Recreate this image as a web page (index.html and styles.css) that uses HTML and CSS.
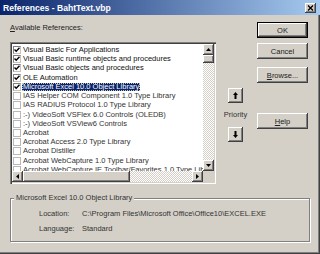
FILE: index.html
```html
<!DOCTYPE html>
<html>
<head>
<meta charset="utf-8">
<link rel="stylesheet" href="styles.css">
</head>
<body>
<div class="window">
  <div class="titlebar">
    <span class="title">References - BahtText.vbp</span>
    <span class="close"><svg width="7" height="6" viewBox="0 0 7 6"><path d="M1 0.5L6 5.5M6 0.5L1 5.5" stroke="#000" stroke-width="1.3" fill="none"/></svg></span>
  </div>
  <div class="main">
    <div class="left">
      <div class="label"><u>A</u>vailable References:</div>
      <div class="list">
        <div class="rows">
          <div class="row on"><span class="box"><svg width="6" height="6" viewBox="0 0 6 6"><path d="M0.5 2.5L2.2 4.3L5.5 0.8" fill="none" stroke="#000" stroke-width="1.4"/></svg></span><span class="txt">Visual Basic For Applications</span></div>
          <div class="row on"><span class="box"><svg width="6" height="6" viewBox="0 0 6 6"><path d="M0.5 2.5L2.2 4.3L5.5 0.8" fill="none" stroke="#000" stroke-width="1.4"/></svg></span><span class="txt">Visual Basic runtime objects and procedures</span></div>
          <div class="row on"><span class="box"><svg width="6" height="6" viewBox="0 0 6 6"><path d="M0.5 2.5L2.2 4.3L5.5 0.8" fill="none" stroke="#000" stroke-width="1.4"/></svg></span><span class="txt">Visual Basic objects and procedures</span></div>
          <div class="row on"><span class="box"><svg width="6" height="6" viewBox="0 0 6 6"><path d="M0.5 2.5L2.2 4.3L5.5 0.8" fill="none" stroke="#000" stroke-width="1.4"/></svg></span><span class="txt">OLE Automation</span></div>
          <div class="row on sel"><span class="box"><svg width="6" height="6" viewBox="0 0 6 6"><path d="M0.5 2.5L2.2 4.3L5.5 0.8" fill="none" stroke="#000" stroke-width="1.4"/></svg></span><span class="txt">Microsoft Excel 10.0 Object Library</span></div>
          <div class="row off"><span class="box"></span><span class="txt">IAS Helper COM Component 1.0 Type Library</span></div>
          <div class="row off"><span class="box"></span><span class="txt">IAS RADIUS Protocol 1.0 Type Library</span></div>
          <div class="row off"><span class="box"></span><span class="txt">:-) VideoSoft VSFlex 6.0 Controls (OLEDB)</span></div>
          <div class="row off"><span class="box"></span><span class="txt">:-) VideoSoft VSView6 Controls</span></div>
          <div class="row off"><span class="box"></span><span class="txt">Acrobat</span></div>
          <div class="row off"><span class="box"></span><span class="txt">Acrobat Access 2.0 Type Library</span></div>
          <div class="row off"><span class="box"></span><span class="txt">Acrobat Distiller</span></div>
          <div class="row off"><span class="box"></span><span class="txt">Acrobat WebCapture 1.0 Type Library</span></div>
          <div class="row off"><span class="box"></span><span class="txt">Acrobat WebCapture IE Toolbar/Favorites 1.0 Type Library</span></div>
          <div class="row off"><span class="box"></span><span class="txt">Active DS Type Library</span></div>
        </div>
        <div class="vscroll">
          <div class="sbtn"><svg width="5" height="3" viewBox="0 0 5 3"><path d="M0 3H5L2.5 0z"/></svg></div>
          <div class="thumb vthumb"></div>
          <div class="track"></div>
          <div class="sbtn"><svg width="5" height="3" viewBox="0 0 5 3"><path d="M0 0H5L2.5 3z"/></svg></div>
        </div>
        <div class="hscroll">
          <div class="sbtn"><svg width="3" height="5" viewBox="0 0 3 5"><path d="M3 0V5L0 2.5z"/></svg></div>
          <div class="thumb hthumb"></div>
          <div class="track"></div>
          <div class="sbtn"><svg width="3" height="5" viewBox="0 0 3 5"><path d="M0 0V5L3 2.5z"/></svg></div>
        </div>
        <div class="corner"></div>
      </div>
    </div>
    <div class="middle">
      <div class="pbtn"><svg width="5" height="7" viewBox="0 0 5 7"><path d="M2.5 0L5 3H3.5V7H1.5V3H0z"/></svg></div>
      <div class="plabel">Priority</div>
      <div class="pbtn"><svg width="5" height="7" viewBox="0 0 5 7"><path d="M2.5 7L5 4H3.5V0H1.5V4H0z"/></svg></div>
    </div>
    <div class="right">
      <div class="btn default">OK</div>
      <div class="btn cancel">Cancel</div>
      <div class="btn browse"><u>B</u>rowse...</div>
      <div class="btn help"><u>H</u>elp</div>
    </div>
  </div>
  <fieldset class="group">
    <legend>Microsoft Excel 10.0 Object Library</legend>
    <div class="info"><span class="k">Location:</span><span class="v">C:\Program Files\Microsoft Office\Office10\EXCEL.EXE</span></div>
    <div class="info"><span class="k">Language:</span><span class="v">Standard</span></div>
  </fieldset>
</div>
</body>
</html>
```
FILE: styles.css
```css
html, body {
  margin: 0;
  padding: 0;
  background: #d4d0c8;
}
.window {
  width: 320px;
  height: 254px;
  background: #d4d0c8;
  overflow: hidden;
  font-family: "Liberation Sans", Arial, sans-serif;
  font-size: 7.5px;
  color: #000;
  box-shadow: inset -1px -1px #404040, inset -2px -2px #808080;
}
.titlebar {
  height: 15px;
  display: flex;
  align-items: center;
  justify-content: space-between;
  padding: 0 4px 0 3px;
  background: linear-gradient(90deg, #0a246a, #a6caf0);
  color: #fff;
  font-weight: bold;
  font-size: 8.6px;
}
.title { white-space: nowrap; }
.close {
  width: 11px;
  height: 10px;
  background: #d4d0c8;
  box-shadow: inset -1px -1px #404040, inset 1px 1px #fff, inset -2px -2px #808080;
  display: flex;
  align-items: center;
  justify-content: center;
}
.main {
  display: flex;
  align-items: flex-start;
}
.left {
  margin-left: 10px;
  width: 206px;
}
.label {
  margin-top: 8px;
  height: 10px;
  line-height: 10px;
  white-space: nowrap;
  color: #222;
}
.list {
  margin-top: 9px;
  display: grid;
  grid-template-columns: 191px 11px;
  grid-template-rows: 127px 11px;
  padding: 2px;
  background: #fff;
  box-shadow: inset 1px 1px #808080, inset 2px 2px #404040, inset -1px -1px #fff, inset -2px -2px #d4d0c8;
}
.rows {
  overflow: hidden;
  padding-top: 1.4px;
}
.row {
  display: flex;
  align-items: center;
  height: 9.23px;
  white-space: nowrap;
  padding-left: 1px;
  color: #111;
}
.row.off { color: #333; }
.box {
  flex: none;
  width: 8px;
  height: 8px;
  box-sizing: border-box;
  background: #fff;
  border: 1px solid;
  border-color: #808080 #c8c4bc #c8c4bc #808080;
  margin-right: 1px;
  display: flex;
  align-items: center;
  justify-content: center;
}
.row.off .box {
  border-color: #b8b8b8;
}
.txt {
  padding: 0 1px;
  line-height: 8px;
}
.sel .txt {
  background: #0a246a;
  color: #fff;
  outline: 1px dotted #c8c4bc;
  outline-offset: -1px;
}
.vscroll {
  display: flex;
  flex-direction: column;
}
.hscroll {
  display: flex;
}
.sbtn, .thumb, .pbtn, .btn {
  background: #d4d0c8;
  box-shadow: inset -1px -1px #404040, inset 1px 1px #fff, inset -2px -2px #808080;
}
.sbtn {
  flex: none;
  width: 11px;
  height: 11px;
  display: flex;
  align-items: center;
  justify-content: center;
}
.vthumb { flex: none; height: 8px; }
.hthumb { flex: none; width: 107px; }
.track {
  flex: 1;
  background: repeating-conic-gradient(#fff 0 25%, #d4d0c8 0 50%) 0 0 / 2px 2px;
}
.corner { background: #d4d0c8; }
.middle {
  margin-left: 6px;
  width: 27px;
  display: flex;
  flex-direction: column;
  align-items: center;
  padding-top: 73px;
}
.pbtn {
  width: 15px;
  height: 15px;
  display: flex;
  align-items: center;
  justify-content: center;
}
.plabel {
  line-height: 10px;
  margin: 7px 0;
  white-space: nowrap;
  color: #333;
}
.right {
  margin-left: 8px;
  width: 51px;
  padding-top: 7px;
  display: flex;
  flex-direction: column;
}
.btn {
  height: 16px;
  box-sizing: border-box;
  display: flex;
  align-items: center;
  justify-content: center;
  white-space: nowrap;
  color: #222;
}
.btn.default { border: 1px solid #000; }
.cancel { margin-top: 5px; }
.browse { margin-top: 8px; }
.help { margin-top: 30px; }
.group {
  margin: 9px 10px 0;
  padding: 6px 0 7px 0;
  border: 1px solid #808080;
  box-shadow: inset 1px 1px #fff, 1px 1px #fff;
  min-width: 0;
  color: #333;
}
.group legend {
  padding: 0 2px;
  margin-left: 3px;
  line-height: 10px;
  background: #d4d0c8;
  white-space: nowrap;
}
.info {
  display: flex;
  padding-left: 28px;
  line-height: 10px;
  white-space: nowrap;
}
.info + .info { margin-top: 5px; }
.k { width: 43px; flex: none; }
```
